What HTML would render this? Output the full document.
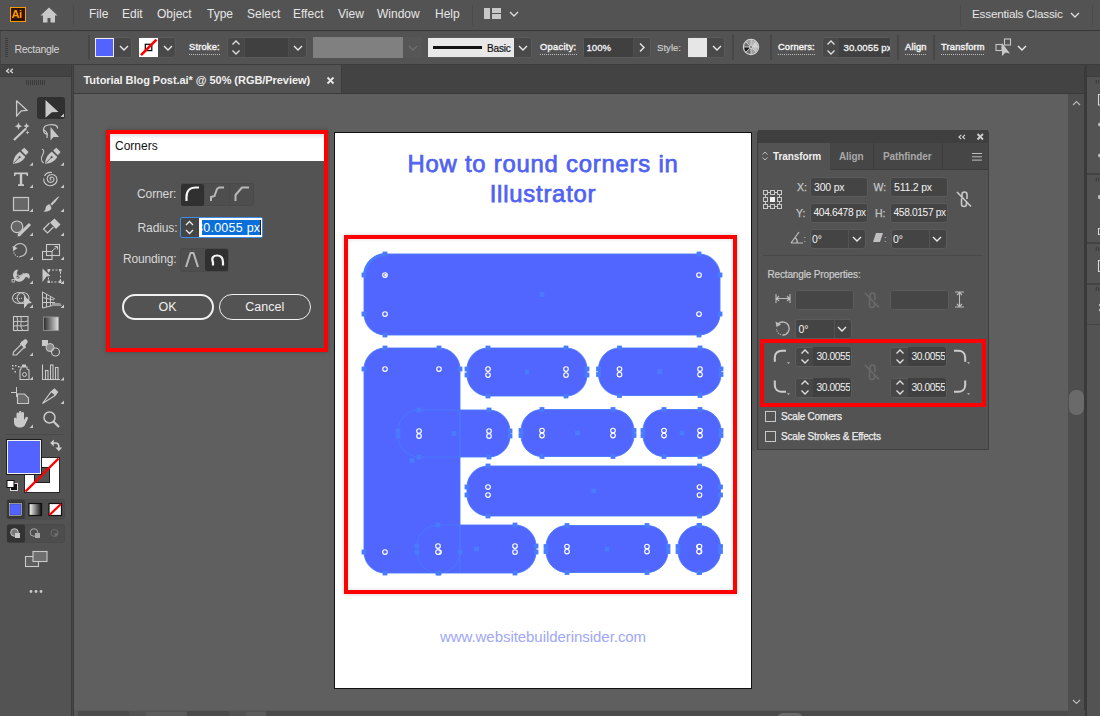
<!DOCTYPE html>
<html><head><meta charset="utf-8">
<style>
*{box-sizing:border-box;margin:0;padding:0}
html,body{width:1100px;height:716px;overflow:hidden;background:#535353;font-family:"Liberation Sans",sans-serif;color:#dcdcdc}
.a{position:absolute}
.t{position:absolute;white-space:nowrap;line-height:1}
.sep{position:absolute;width:1px;background:#454545}
.box{position:absolute;background:#464646;border:1px solid #3c3c3c;border-radius:3px}
.chev{position:absolute}
</style></head><body>
<!-- MENU BAR -->
<div class="a" style="left:0;top:0;width:1100px;height:30px;background:#535353"></div>
<div class="a" style="left:0;top:30px;width:1100px;height:1px;background:#383838"></div>
<!-- CONTROL BAR -->
<div class="a" style="left:1px;top:31px;width:1099px;height:33px;background:#535353;border-radius:3px 0 0 0"></div>
<div class="a" style="left:0;top:64px;width:1100px;height:1px;background:#3d3d3d"></div>
<!-- TOOLS PANEL -->
<div class="a" style="left:0;top:65px;width:72px;height:651px;background:#535353"></div>
<div class="a" style="left:0;top:65px;width:71px;height:11px;background:#434343"></div>
<div class="a" style="left:71px;top:65px;width:1px;height:651px;background:#3b3b3b"></div><div class="a" style="left:72px;top:65px;width:1px;height:651px;background:#484848"></div><div class="a" style="left:73px;top:65px;width:1px;height:651px;background:#3b3b3b"></div>
<!-- TAB BAR -->
<div class="a" style="left:74px;top:65px;width:1011px;height:28px;background:#434343"></div>
<div class="a" style="left:74px;top:65px;width:267px;height:28px;background:#535353"></div><div class="a" style="left:341px;top:65px;width:1px;height:28px;background:#3d3d3d"></div>
<div class="a" style="left:74px;top:93px;width:1011px;height:1px;background:#3a3a3a"></div>
<!-- CANVAS -->
<div class="a" style="left:74px;top:94px;width:994px;height:616px;background:#5f5f5f"></div>
<div class="a" style="left:1068px;top:94px;width:17px;height:616px;background:#4e4e4e"></div>
<div class="a" style="left:74px;top:710px;width:1011px;height:6px;background:#4a4a4a"></div>
<div class="a" style="left:1085px;top:65px;width:1px;height:651px;background:#353535"></div>
<div class="a" style="left:1086px;top:65px;width:14px;height:651px;background:#535353"></div>
<div class="a" style="left:1086px;top:65px;width:14px;height:11px;background:#434343"></div>

<!-- MENU CONTENT -->
<div class="a" style="left:10px;top:7px;width:16px;height:15px;background:#2d1400;border:1.5px solid #ff9a00"></div>
<div class="t" style="left:11.5px;top:8.5px;font-size:11px;font-weight:bold;color:#ff9a00;letter-spacing:-0.5px">Ai</div>
<svg class="a" style="left:40px;top:7px" width="18" height="16" viewBox="0 0 18 16"><path d="M9 0.5 L17.5 8.5 L15 8.5 L15 15.5 L10.5 15.5 L10.5 11 L7.5 11 L7.5 15.5 L3 15.5 L3 8.5 L0.5 8.5 Z" fill="#c8c8c8"/></svg>
<div class="sep" style="left:73px;top:5px;height:20px;background:#4a4a4a"></div>
<div class="t" style="left:89px;top:8px;font-size:12px;color:#e6e6e6">File</div>
<div class="t" style="left:122px;top:8px;font-size:12px;color:#e6e6e6">Edit</div>
<div class="t" style="left:157px;top:8px;font-size:12px;color:#e6e6e6">Object</div>
<div class="t" style="left:207px;top:8px;font-size:12px;color:#e6e6e6">Type</div>
<div class="t" style="left:247px;top:8px;font-size:12px;color:#e6e6e6">Select</div>
<div class="t" style="left:293px;top:8px;font-size:12px;color:#e6e6e6">Effect</div>
<div class="t" style="left:338px;top:8px;font-size:12px;color:#e6e6e6">View</div>
<div class="t" style="left:377px;top:8px;font-size:12px;color:#e6e6e6">Window</div>
<div class="t" style="left:435px;top:8px;font-size:12px;color:#e6e6e6">Help</div>
<div class="sep" style="left:472px;top:5px;height:20px;background:#4a4a4a"></div>
<div class="a" style="left:484px;top:8px;width:6px;height:11px;background:#c8c8c8"></div>
<div class="a" style="left:492px;top:8px;width:9px;height:4.5px;background:#c8c8c8"></div>
<div class="a" style="left:492px;top:14px;width:9px;height:5px;background:#c8c8c8"></div>
<svg class="a" style="left:509px;top:11px" width="10" height="6" viewBox="0 0 10 6"><path d="M1 1 L5 5 L9 1" stroke="#dcdcdc" stroke-width="1.4" fill="none"/></svg>
<div class="sep" style="left:960px;top:5px;height:20px;background:#4a4a4a"></div>
<div class="t" style="left:972px;top:8px;font-size:11.7px;color:#e6e6e6;letter-spacing:-0.2px">Essentials Classic</div>
<svg class="a" style="left:1070px;top:12px" width="10" height="6" viewBox="0 0 10 6"><path d="M1 1 L5 5 L9 1" stroke="#dcdcdc" stroke-width="1.4" fill="none"/></svg>
<div class="sep" style="left:1092px;top:5px;height:20px;background:#4a4a4a"></div>

<!-- CONTROL CONTENT -->
<svg class="a" style="left:0;top:30px" width="10" height="36" viewBox="0 0 10 36"><rect x="0" y="1" width="1" height="33" fill="#474747"/><g fill="#3a3a3a"><rect x="5" y="8" width="3" height="1"/><rect x="5" y="10" width="3" height="1"/><rect x="5" y="12" width="3" height="1"/><rect x="5" y="14" width="3" height="1"/><rect x="5" y="16" width="3" height="1"/><rect x="5" y="18" width="3" height="1"/><rect x="5" y="20" width="3" height="1"/><rect x="5" y="22" width="3" height="1"/><rect x="5" y="24" width="3" height="1"/><rect x="5" y="26" width="3" height="1"/></g></svg>
<div class="t" style="left:14.5px;top:43.5px;font-size:10.5px;color:#d6d6d6;letter-spacing:-0.3px">Rectangle</div>
<div class="sep" style="left:88px;top:35px;height:25px;width:1.5px;background:#474747"></div>
<div class="box" style="left:95px;top:37px;width:37px;height:20.5px;background:#494949;border-color:#5a5a5a"></div>
<div class="a" style="left:95px;top:38px;width:19px;height:19px;background:#5263ff;border:1px solid #ececec"></div>
<svg class="a" style="left:118.5px;top:44.5px" width="10" height="6" viewBox="0 0 10 6"><path d="M1 1 L5 5 L9 1" stroke="#e8e8e8" stroke-width="1.4" fill="none"/></svg>
<div class="box" style="left:139px;top:37px;width:37px;height:20.5px;background:#494949;border-color:#5a5a5a"></div>
<svg class="a" style="left:139px;top:38px" width="19" height="19" viewBox="0 0 19 19"><rect width="19" height="19" fill="#fff"/><rect x="6.3" y="6.3" width="6.5" height="6.3" fill="none" stroke="#000" stroke-width="1.2"/><path d="M2 17.2 L17.5 1.7" stroke="#ff0000" stroke-width="2.6"/></svg>
<svg class="a" style="left:162.5px;top:44.5px" width="10" height="6" viewBox="0 0 10 6"><path d="M1 1 L5 5 L9 1" stroke="#e8e8e8" stroke-width="1.4" fill="none"/></svg>
<div class="t" style="left:189px;top:43.1px;font-size:9.3px;color:#f4f4f4;letter-spacing:0.2px;-webkit-text-stroke:0.4px #f4f4f4">Stroke:</div>
<div class="a" style="left:189px;top:54px;width:31px;height:1px;background:repeating-linear-gradient(90deg,#bdbdbd 0 1px,transparent 1px 2px)"></div>
<div class="box" style="left:227px;top:37px;width:80px;height:20.5px;background:#474747;border-color:#5a5a5a"></div>
<div class="a" style="left:244px;top:38px;width:45px;height:19px;background:#404040"></div>
<div class="a" style="left:244px;top:38px;width:1px;height:19px;background:#4c4c4c"></div>
<div class="a" style="left:288px;top:38px;width:1px;height:19px;background:#4c4c4c"></div>
<svg class="a" style="left:230px;top:39px" width="12" height="17" viewBox="0 0 12 17"><path d="M2.5 5.5 L6 2 L9.5 5.5 M2.5 11.5 L6 15 L9.5 11.5" stroke="#e0e0e0" stroke-width="1.3" fill="none"/></svg>
<svg class="a" style="left:293px;top:44.5px" width="10" height="6" viewBox="0 0 10 6"><path d="M1 1 L5 5 L9 1" stroke="#e8e8e8" stroke-width="1.4" fill="none"/></svg>
<div class="a" style="left:313px;top:37px;width:90px;height:21px;background:#808080"></div>
<div class="a" style="left:403px;top:37px;width:19px;height:21px;background:#565656"></div>
<svg class="a" style="left:407.5px;top:44.5px" width="10" height="6" viewBox="0 0 10 6"><path d="M1 1 L5 5 L9 1" stroke="#6e6e6e" stroke-width="1.4" fill="none"/></svg>
<div class="box" style="left:428px;top:37px;width:104px;height:20.5px;background:#494949;border-color:#5a5a5a"></div>
<div class="a" style="left:428px;top:38px;width:86px;height:19px;background:#e8e8e8"></div>
<div class="a" style="left:433px;top:46px;width:49px;height:3px;background:#111"></div>
<div class="t" style="left:487px;top:43.5px;font-size:10px;color:#111;letter-spacing:-0.15px;-webkit-text-stroke:0.2px #111">Basic</div>
<svg class="a" style="left:518px;top:44.5px" width="10" height="6" viewBox="0 0 10 6"><path d="M1 1 L5 5 L9 1" stroke="#e8e8e8" stroke-width="1.4" fill="none"/></svg>
<div class="t" style="left:540px;top:43.1px;font-size:9.3px;color:#f4f4f4;letter-spacing:0.3px;-webkit-text-stroke:0.4px #f4f4f4">Opacity:</div>
<div class="a" style="left:540px;top:54px;width:37px;height:1px;background:repeating-linear-gradient(90deg,#bdbdbd 0 1px,transparent 1px 2px)"></div>
<div class="box" style="left:583px;top:37px;width:68px;height:20.5px;background:#494949;border-color:#5a5a5a"></div>
<div class="a" style="left:584px;top:38px;width:49px;height:19px;background:#404040"></div>
<div class="a" style="left:633px;top:38px;width:1px;height:19px;background:#4e4e4e"></div>
<div class="t" style="left:586.5px;top:43px;font-size:9.6px;color:#f4f4f4;letter-spacing:0px;-webkit-text-stroke:0.3px #f4f4f4">100%</div>
<svg class="a" style="left:638px;top:42px" width="8" height="11" viewBox="0 0 8 11"><path d="M2 1.5 L6 5.5 L2 9.5" stroke="#e8e8e8" stroke-width="1.4" fill="none"/></svg>
<div class="t" style="left:657px;top:43.1px;font-size:9.5px;color:#d0d0d0;letter-spacing:0.05px;-webkit-text-stroke:0.15px #d0d0d0">Style:</div>
<div class="box" style="left:688px;top:37px;width:37px;height:20.5px;background:#494949;border-color:#5a5a5a"></div>
<div class="a" style="left:688px;top:38px;width:19px;height:19px;background:#e6e6e6"></div>
<svg class="a" style="left:711.5px;top:44.5px" width="10" height="6" viewBox="0 0 10 6"><path d="M1 1 L5 5 L9 1" stroke="#e8e8e8" stroke-width="1.4" fill="none"/></svg>
<div class="sep" style="left:732px;top:35px;height:25px;width:1.5px;background:#474747"></div>
<svg class="a" style="left:742px;top:38px" width="18" height="18" viewBox="0 0 18 18"><path d="M9 9 L9.00 2.00 A7 7 0 0 1 13.95 4.05 Z" fill="#b4b4b4"/><path d="M9 9 L13.95 4.05 A7 7 0 0 1 16.00 9.00 Z" fill="#d2d2d2"/><path d="M9 9 L16.00 9.00 A7 7 0 0 1 13.95 13.95 Z" fill="#c0c0c0"/><path d="M9 9 L13.95 13.95 A7 7 0 0 1 9.00 16.00 Z" fill="#a0a0a0"/><path d="M9 9 L9.00 16.00 A7 7 0 0 1 4.05 13.95 Z" fill="#6e6e6e"/><path d="M9 9 L4.05 13.95 A7 7 0 0 1 2.00 9.00 Z" fill="#1c1c1c"/><path d="M9 9 L2.00 9.00 A7 7 0 0 1 4.05 4.05 Z" fill="#707070"/><path d="M9 9 L4.05 4.05 A7 7 0 0 1 9.00 2.00 Z" fill="#9c9c9c"/><path d="M9.00 7.20 L9.00 1.50" stroke="#d4d4d4" stroke-width="0.9"/><path d="M10.27 7.73 L14.30 3.70" stroke="#d4d4d4" stroke-width="0.9"/><path d="M10.80 9.00 L16.50 9.00" stroke="#d4d4d4" stroke-width="0.9"/><path d="M10.27 10.27 L14.30 14.30" stroke="#d4d4d4" stroke-width="0.9"/><path d="M9.00 10.80 L9.00 16.50" stroke="#d4d4d4" stroke-width="0.9"/><path d="M7.73 10.27 L3.70 14.30" stroke="#d4d4d4" stroke-width="0.9"/><path d="M7.20 9.00 L1.50 9.00" stroke="#d4d4d4" stroke-width="0.9"/><path d="M7.73 7.73 L3.70 3.70" stroke="#d4d4d4" stroke-width="0.9"/><circle cx="9" cy="9" r="7.6" fill="none" stroke="#d4d4d4" stroke-width="1.2"/><circle cx="9" cy="9" r="1.7" fill="#8a8a8a" stroke="#d4d4d4" stroke-width="0.9"/></svg>
<div class="sep" style="left:770px;top:35px;height:25px;width:1.5px;background:#474747"></div>
<div class="t" style="left:778px;top:43.1px;font-size:9.3px;color:#f4f4f4;letter-spacing:0.15px;-webkit-text-stroke:0.4px #f4f4f4">Corners:</div>
<div class="a" style="left:778px;top:54px;width:37px;height:1px;background:repeating-linear-gradient(90deg,#bdbdbd 0 1px,transparent 1px 2px)"></div>
<div class="box" style="left:822px;top:37px;width:69px;height:20.5px;background:#494949;border-color:#5a5a5a"></div>
<div class="a" style="left:839px;top:38px;width:51px;height:19px;background:#404040"></div>
<svg class="a" style="left:825px;top:39px" width="12" height="17" viewBox="0 0 12 17"><path d="M2.5 5.5 L6 2 L9.5 5.5 M2.5 11.5 L6 15 L9.5 11.5" stroke="#e0e0e0" stroke-width="1.3" fill="none"/></svg>
<div class="a" style="left:840px;top:38px;width:50px;height:19px;overflow:hidden"><div class="t" style="left:3.5px;top:5px;font-size:9.6px;color:#f4f4f4;letter-spacing:0.05px;-webkit-text-stroke:0.3px #f4f4f4">30.0055 px</div></div>
<div class="sep" style="left:897px;top:35px;height:25px;width:1.5px;background:#474747"></div>
<div class="t" style="left:905px;top:43.1px;font-size:9.3px;color:#f4f4f4;letter-spacing:0.2px;-webkit-text-stroke:0.4px #f4f4f4">Align</div>
<div class="a" style="left:905px;top:54px;width:22px;height:1px;background:repeating-linear-gradient(90deg,#bdbdbd 0 1px,transparent 1px 2px)"></div>
<div class="sep" style="left:933px;top:35px;height:25px;width:1.5px;background:#474747"></div>
<div class="t" style="left:941px;top:43.1px;font-size:9.3px;color:#f4f4f4;letter-spacing:0.2px;-webkit-text-stroke:0.4px #f4f4f4">Transform</div>
<div class="a" style="left:941px;top:54px;width:44px;height:1px;background:repeating-linear-gradient(90deg,#bdbdbd 0 1px,transparent 1px 2px)"></div>
<svg class="a" style="left:995px;top:38px" width="18" height="19" viewBox="0 0 18 19"><rect x="9.5" y="1" width="6" height="6" fill="none" stroke="#c8c8c8" stroke-width="1.1"/><rect x="1" y="6.5" width="6" height="6" fill="none" stroke="#c8c8c8" stroke-width="1.1"/><path d="M7 5 L7 18 L10.5 14.5 L15 15.5 Z" fill="#c8c8c8"/></svg>
<svg class="a" style="left:1017px;top:44.5px" width="10" height="6" viewBox="0 0 10 6"><path d="M1 1 L5 5 L9 1" stroke="#e8e8e8" stroke-width="1.4" fill="none"/></svg>


<!-- RIGHT DOCK -->
<div class="a" style="left:1084px;top:65px;width:2.5px;height:651px;background:#3a3a3a"></div>
<div class="a" style="left:1086.5px;top:76px;width:14px;height:1px;background:#3e3e3e"></div>
<div class="a" style="left:1086.5px;top:173px;width:14px;height:2px;background:#434343"></div>
<div class="a" style="left:1086.5px;top:242px;width:14px;height:2px;background:#434343"></div>
<div class="a" style="left:1086.5px;top:282.5px;width:14px;height:2px;background:#434343"></div>
<div class="a" style="left:1086.5px;top:323.5px;width:14px;height:1.5px;background:#434343"></div>
<svg class="a" style="left:1086px;top:76px" width="14" height="250" viewBox="0 0 14 250"><g fill="#3a3a3a"><rect x="9.8" y="4" width="1" height="3.5"/><rect x="12" y="4" width="1" height="3.5"/><rect x="9.8" y="102" width="1" height="3.5"/><rect x="12" y="102" width="1" height="3.5"/><rect x="9.8" y="171" width="1" height="3.5"/><rect x="12" y="171" width="1" height="3.5"/><rect x="9.8" y="211" width="1" height="3.5"/><rect x="12" y="211" width="1" height="3.5"/></g>
<g fill="none" stroke="#d8d8d8" stroke-width="1.1"><path d="M15 18.5 L12.5 18.5 L12.5 29 L15 29"/><path d="M15 152.5 L12.5 152.5 L12.5 158.5 L15 158.5"/><path d="M15 184.5 L12.5 184.5 L12.5 195.5 L15 195.5"/></g>
<g fill="#bcbcbc"><circle cx="14" cy="48.5" r="2"/><circle cx="14" cy="79.5" r="2"/><circle cx="14" cy="121" r="2.2"/><circle cx="14" cy="229" r="1.2"/><circle cx="14" cy="234" r="1.2"/></g></svg>
<!-- H SCROLL -->
<div class="a" style="left:74px;top:710px;width:994px;height:1px;background:#5a5a5a"></div>
<div class="a" style="left:74px;top:711px;width:994px;height:5px;background:#4a4a4a"></div>
<div class="a" style="left:74px;top:711px;width:4px;height:5px;background:#585858"></div>
<div class="a" style="left:128.5px;top:711px;width:17px;height:5px;background:#525252"></div>
<div class="a" style="left:146px;top:711px;width:41px;height:5px;background:#5c5c5c;border-top:1px solid #525252"></div>
<div class="a" style="left:228.5px;top:711px;width:17px;height:5px;background:#525252"></div>
<div class="a" style="left:246px;top:711px;width:20px;height:5px;background:#5c5c5c;border-top:1px solid #525252"></div>
<div class="a" style="left:1068px;top:710px;width:17px;height:6px;background:#4e4e4e"></div>
<div class="a" style="left:777px;top:712.5px;width:26px;height:12px;background:#6a6a6a;border-radius:6px"></div>
<!-- TOOLS CONTENT -->
<svg class="a" style="left:0;top:0" width="74" height="716" viewBox="0 0 74 716">
<path d="M9 68.8 L6.6 70.9 L9 73 M12.8 68.8 L10.4 70.9 L12.8 73" fill="none" stroke="#d0d0d0" stroke-width="1.4"/><rect x="0" y="76" width="71" height="1" fill="#3e3e3e"/>
<g fill="#3a3a3a"><rect x="26" y="80" width="1" height="5"/><rect x="28" y="80" width="1" height="5"/><rect x="30" y="80" width="1" height="5"/><rect x="32" y="80" width="1" height="5"/><rect x="34" y="80" width="1" height="5"/><rect x="36" y="80" width="1" height="5"/><rect x="38" y="80" width="1" height="5"/><rect x="40" y="80" width="1" height="5"/><rect x="42" y="80" width="1" height="5"/><rect x="44" y="80" width="1" height="5"/></g>
<rect x="37" y="97" width="28" height="22" rx="3" fill="#303030"/>
<path d="M16.6 100.8 L27.2 110.4 L21.2 110.8 L16.6 116.2 Z" fill="none" stroke="#c9c9c9" stroke-width="1.3" stroke-linejoin="round"/>
<path d="M45.5 100 L58.5 112 L51.8 112.2 L45.5 117.8 Z" fill="#c9c9c9"/>
<path d="M64 117 L64 113.5 L60.5 117 Z" fill="#c9c9c9"/>
<!-- magic wand -->
<path d="M14 140 L26 128.5" stroke="#c9c9c9" stroke-width="2.2"/>
<path d="M18.5 122.5 l1.1 2.6 2.6 1.1 -2.6 1.1 -1.1 2.6 -1.1 -2.6 -2.6 -1.1 2.6 -1.1Z M26.5 123 l0.9 2.1 2.1 0.9 -2.1 0.9 -0.9 2.1 -0.9 -2.1 -2.1 -0.9 2.1 -0.9Z M27.5 130.5 l0.6 1.4 1.4 0.6 -1.4 0.6 -0.6 1.4 -0.6 -1.4 -1.4 -0.6 1.4 -0.6Z" fill="#c9c9c9"/>
<!-- lasso -->
<path d="M48 134 C42 134 42 126 48 125 C54 124 58 125 57.5 128.5" fill="none" stroke="#c9c9c9" stroke-width="1.2"/>
<path d="M44 130 C46 131 48 133 47 138" fill="none" stroke="#c9c9c9" stroke-width="1.2"/>
<path d="M50.5 127 L50.5 140.5 L53.5 137 L59 137 Z" fill="#c9c9c9"/>
<!-- pen -->
<path d="M13 163.8 C13.5 158.5 15.5 154.5 20 151.8 L25.3 157 C22.5 161.5 18.5 163.5 13 163.8 Z" fill="#c9c9c9"/>
<path d="M21.2 150.6 L24.3 147.8 L28.6 152 L25.8 155.2 Z" fill="#c9c9c9"/>
<path d="M13.8 163 L19.2 157.6" stroke="#535353" stroke-width="0.9"/><circle cx="19.6" cy="157.2" r="1.1" fill="#535353"/>
<path d="M33 165.8 L33 162.3 L29.5 165.8 Z" fill="#c9c9c9"/>
<!-- curvature pen -->
<path d="M45 163.8 C45.5 158.5 47.5 154.5 52 151.8 L57.3 157 C54.5 161.5 50.5 163.5 45 163.8 Z" fill="#c9c9c9"/>
<path d="M53.2 150.6 L56.3 147.8 L60.6 152 L57.8 155.2 Z" fill="#c9c9c9"/>
<path d="M45.8 163 L51.2 157.6" stroke="#535353" stroke-width="0.9"/><circle cx="51.6" cy="157.2" r="1.1" fill="#535353"/>
<path d="M42 149 C44.5 150 44 152.5 42.5 155 C41 157.5 41 161 43.5 163" fill="none" stroke="#c9c9c9" stroke-width="1.1"/>
<path d="M64 165.8 L64 162.3 L60.5 165.8 Z" fill="#c9c9c9"/>
<!-- type -->
<path d="M14 172.5 L28 172.5 L28 176 L26.8 176 L26.3 174.3 L22.2 174.3 L22.2 184.3 L24 184.3 L24 186 L18 186 L18 184.3 L19.8 184.3 L19.8 174.3 L15.7 174.3 L15.2 176 L14 176 Z" fill="#c9c9c9"/>
<path d="M33 188 L33 184.5 L29.5 188 Z" fill="#c9c9c9"/>
<!-- spiral -->
<path d="M51.5 180 C50 180 49.5 178.5 50.5 177.5 C52 176.5 54 177.5 54 179.5 C54 182 51 183 49 182 C46.5 180.5 46.5 176.5 49.5 175 C53 173.5 57 175.5 57 179.5 C57 184 52.5 186.5 48.5 185.5 C45 184.5 43.5 181.5 43.8 178.5 M44.5 176 C46 173 49 172 52 172.5" fill="none" stroke="#c9c9c9" stroke-width="1.1"/>
<path d="M64 188 L64 184.5 L60.5 188 Z" fill="#c9c9c9"/>
<!-- rectangle -->
<rect x="13.5" y="197.5" width="15" height="13" fill="#676767" stroke="#c9c9c9" stroke-width="1.2"/>
<path d="M33 212 L33 208.5 L29.5 212 Z" fill="#c9c9c9"/>
<!-- brush -->
<path d="M59.5 196 C58 199 54 203.5 52 205.5 L50.5 204 C52.5 202 56.5 197.5 59.5 196 Z" fill="#c9c9c9"/>
<path d="M50 204.5 C47 204 45.5 207 45.5 209 C45 211 43 211.5 43 211.5 C46 212 50.5 211.5 51.5 208 Z" fill="#c9c9c9"/>
<path d="M64 212 L64 208.5 L60.5 212 Z" fill="#c9c9c9"/>
<!-- shaper -->
<circle cx="17" cy="226.8" r="5.8" fill="#676767" stroke="#c9c9c9" stroke-width="1.2"/>
<path d="M18.5 235.5 L30 224" stroke="#c9c9c9" stroke-width="3"/>
<path d="M17.5 236.5 L18.2 233.5 L20.5 235.8 Z" fill="#c9c9c9"/>
<path d="M33 236 L33 232.5 L29.5 236 Z" fill="#c9c9c9"/>
<!-- eraser -->
<path d="M50 222.5 L54.5 218.5 L60.5 224.5 L56 229 Z" fill="#c9c9c9"/>
<path d="M49.5 223 L43.5 229 L47.5 233 L53.5 227" fill="none" stroke="#c9c9c9" stroke-width="1.2"/>
<path d="M64 236 L64 232.5 L60.5 236 Z" fill="#c9c9c9"/>
<!-- rotate -->
<path d="M13.5 250 A6.5 6.5 0 1 1 20 256.5" fill="none" stroke="#c9c9c9" stroke-width="1.2"/>
<path d="M20 257 A6.5 6.5 0 0 1 13.5 250.5" fill="none" stroke="#c9c9c9" stroke-width="1.2" stroke-dasharray="1 1.3"/>
<path d="M12.5 246 L13.5 251 L17.5 248 Z" fill="#c9c9c9"/>
<path d="M33 260 L33 256.5 L29.5 260 Z" fill="#c9c9c9"/>
<!-- scale -->
<rect x="46.5" y="244.5" width="13" height="11" fill="none" stroke="#c9c9c9" stroke-width="1.1"/>
<rect x="42.5" y="251.5" width="9.5" height="8" fill="none" stroke="#c9c9c9" stroke-width="1.1"/>
<path d="M52 251 L57.5 246.5 M54.5 246.5 L57.5 246.5 L57.5 249.5" fill="none" stroke="#c9c9c9" stroke-width="1"/>
<path d="M64 260 L64 256.5 L60.5 260 Z" fill="#c9c9c9"/>
<!-- puppet warp -->
<path d="M13 276 C13 271 16 269 18 270 C17 272 16 274 18 276 C20 278 23 273 26 273 C29 273 31 276 29 279 C28 277 26 276 25 278 C23 282 18 283 15 280 Z" fill="#c9c9c9"/>
<circle cx="18" cy="277" r="2" fill="#535353" stroke="#c9c9c9" stroke-width="0.8"/>
<rect x="12" y="279.5" width="2.5" height="2.5" fill="#535353" stroke="#c9c9c9" stroke-width="0.8"/>
<path d="M14 280 L24 273" stroke="#c9c9c9" stroke-width="0.8"/>
<path d="M33 284 L33 280.5 L29.5 284 Z" fill="#c9c9c9"/>
<!-- free transform -->
<path d="M42.5 268.5 L50.5 276 L46.5 276.5 L42.5 282 Z" fill="#c9c9c9"/>
<rect x="48.5" y="270" width="12" height="12" fill="none" stroke="#c9c9c9" stroke-width="1" stroke-dasharray="2 1.5"/>
<g fill="#c9c9c9"><rect x="47.5" y="269" width="2.5" height="2.5"/><rect x="59" y="269" width="2.5" height="2.5"/><rect x="47.5" y="280.5" width="2.5" height="2.5"/><rect x="59" y="280.5" width="2.5" height="2.5"/></g>
<path d="M64 284 L64 280.5 L60.5 284 Z" fill="#c9c9c9"/>
<!-- shape builder -->
<ellipse cx="19" cy="298" rx="6.5" ry="5.5" fill="none" stroke="#c9c9c9" stroke-width="1.1"/>
<ellipse cx="23" cy="298" rx="6" ry="5.5" fill="none" stroke="#c9c9c9" stroke-width="1.1"/>
<path d="M15 298.5 h1 M17 298.5 h1 M19 298.5 h1 M21 298.5 h1" stroke="#c9c9c9" stroke-width="1"/>
<path d="M24 295.5 L32 303 L28.2 303.5 L24 308.5 Z" fill="#c9c9c9"/>
<path d="M33 308 L33 304.5 L29.5 308 Z" fill="#c9c9c9"/>
<!-- perspective grid -->
<path d="M42.5 292 L42.5 308 M42.5 292 L55 299 M42.5 308 L55 305 M46.5 294 L46.5 307 M50.5 296.5 L50.5 306 M42.5 297.5 L54 300 M42.5 302.5 L55 302.5" fill="none" stroke="#c9c9c9" stroke-width="1"/>
<path d="M52 303 L60 303 L62 306 L52 306 Z" fill="#9a9a9a"/>
<path d="M64 308 L64 304.5 L60.5 308 Z" fill="#c9c9c9"/>
<!-- mesh -->
<rect x="13.5" y="316.5" width="14.5" height="14" fill="none" stroke="#c9c9c9" stroke-width="1.1"/>
<path d="M17 317 C19 322 16 326 17.5 330 M13.5 322 C18 320 23 323 28 321 M21 317 C22 322 19 326 23 330.5 M13.5 326 C18 325 23 327 28 325" fill="none" stroke="#c9c9c9" stroke-width="1"/>
<!-- gradient -->
<defs><linearGradient id="gr" x1="0" x2="1"><stop offset="0" stop-color="#2a2a2a"/><stop offset="1" stop-color="#e0e0e0"/></linearGradient>
<linearGradient id="gr2" x1="0" x2="1"><stop offset="0" stop-color="#fff"/><stop offset="1" stop-color="#111"/></linearGradient></defs>
<rect x="43.5" y="317" width="15" height="13.5" fill="url(#gr)" stroke="#9a9a9a" stroke-width="0.8"/>
<!-- eyedropper -->
<path d="M13 355 L13.5 352 L22 343.5 L25 346.5 L16.5 355 Z" fill="none" stroke="#c9c9c9" stroke-width="1.2"/>
<path d="M21 342 L24.5 339.5 C26 338.5 28.5 341 27.5 342.5 L25 346 L26 347.5 L24.8 348.7 L19.8 343.7 L21 342.5 Z" fill="#c9c9c9"/>
<path d="M33 356 L33 352.5 L29.5 356 Z" fill="#c9c9c9"/>
<!-- blend -->
<rect x="42" y="340" width="6" height="6" fill="#c9c9c9"/>
<circle cx="50" cy="347.5" r="4" fill="#8a8a8a" stroke="#c9c9c9" stroke-width="1"/>
<circle cx="55.5" cy="352" r="4" fill="none" stroke="#c9c9c9" stroke-width="1.1"/>
<!-- symbol sprayer -->
<g fill="#c9c9c9"><rect x="12" y="365" width="1.5" height="1.5"/><rect x="15" y="365" width="1.5" height="1.5"/><rect x="12" y="368" width="1.5" height="1.5"/><rect x="18" y="366" width="1.5" height="1.5"/><rect x="14.5" y="371" width="1.5" height="1.5"/></g>
<path d="M21 367 L27 367 L27 369 L29 370 L29 379.5 L20 379.5 L20 370 L21 369 Z" fill="none" stroke="#c9c9c9" stroke-width="1.1"/>
<circle cx="24.5" cy="374.5" r="2" fill="none" stroke="#c9c9c9" stroke-width="1"/>
<rect x="22" y="364.5" width="4" height="2.5" fill="#c9c9c9"/>
<path d="M33 380 L33 376.5 L29.5 380 Z" fill="#c9c9c9"/>
<!-- graph -->
<path d="M42.5 364.5 L42.5 379.5 L60 379.5" fill="none" stroke="#c9c9c9" stroke-width="1.1"/>
<g fill="none" stroke="#c9c9c9" stroke-width="1.1"><rect x="45.5" y="370.5" width="2.5" height="9"/><rect x="50.5" y="365" width="2.5" height="14.5"/><rect x="55.5" y="367.5" width="2.5" height="12"/></g>
<path d="M64 380.5 L64 377 L60.5 380.5 Z" fill="#c9c9c9"/>
<!-- artboard -->
<path d="M11 392.5 L17 392.5 M16.5 387 L16.5 397" stroke="#c9c9c9" stroke-width="1"/>
<path d="M17.5 394 L24.5 394 L28.5 398 L28.5 403.5 L17.5 403.5 Z" fill="#6a6a6a" stroke="#c9c9c9" stroke-width="1.1"/>
<!-- knife/slice -->
<path d="M42.5 403.5 L51 392 L54.5 389 L57.5 392 L55 395.5 Z" fill="none" stroke="#c9c9c9" stroke-width="1.2"/>
<path d="M51 392 L54.5 389 L57.5 392 L55 395.5 Z" fill="#c9c9c9"/>
<path d="M64 404 L64 400.5 L60.5 404 Z" fill="#c9c9c9"/>
<!-- hand -->
<path d="M14 419 C14 417 16 417 16.5 419 L16.5 414 C16.5 412 19 412 19 414 L19 412.5 C19 410.5 21.5 410.5 21.5 412.5 L21.5 413.5 C21.5 411.5 24 411.5 24 413.5 L24 420 L25.5 417.5 C26.5 416 28.5 417 28 418.5 L25 425 C24 427 22 427.5 19.5 427.5 C16 427.5 14 425 14 422 Z" fill="#c9c9c9"/>
<path d="M33 428 L33 424.5 L29.5 428 Z" fill="#c9c9c9"/>
<!-- zoom -->
<circle cx="49.5" cy="417.5" r="5.5" fill="none" stroke="#c9c9c9" stroke-width="1.5"/>
<path d="M53.5 421.5 L59 427" stroke="#c9c9c9" stroke-width="2.2"/>
<rect x="6" y="434" width="59" height="1" fill="#4a4a4a"/>
<!-- fill/stroke -->
<path d="M52.5 443 L55.5 443 Q58.8 443 58.8 446.5 L58.8 448.5" fill="none" stroke="#cfcfcf" stroke-width="1.7"/>
<path d="M50.2 443 L53.8 439.6 L53.8 446.4 Z M58.8 451.2 L55.4 447.6 L62.2 447.6 Z" fill="#cfcfcf"/>
<rect x="24.5" y="457.5" width="35" height="35" fill="#fff" stroke="#2a2a2a" stroke-width="1"/>
<rect x="34.5" y="467.5" width="15" height="15" fill="#535353" stroke="#1e1e1e" stroke-width="1"/>
<path d="M25.5 491.5 L58.5 458.5" stroke="#ff0000" stroke-width="2.4"/>
<rect x="6.5" y="439.5" width="35" height="35" fill="#5263ff" stroke="#1e1e1e" stroke-width="1"/>
<rect x="7.5" y="440.5" width="33" height="33" fill="none" stroke="#f2f2f2" stroke-width="1"/>
<rect x="10.5" y="483.5" width="7" height="7" fill="#111" stroke="#ddd" stroke-width="1"/>
<rect x="7" y="480.5" width="7" height="7" fill="#fff" stroke="#111" stroke-width="1"/>
<!-- color mode -->
<rect x="7" y="499.5" width="57.5" height="19.5" rx="2" fill="#4d4d4d" stroke="#4a4a4a" stroke-width="1"/>
<rect x="7" y="499.5" width="18" height="19.5" rx="2" fill="#3a3a3a"/>
<rect x="9.5" y="503.5" width="12" height="12" fill="#5263ff" stroke="#111" stroke-width="1.2"/>
<rect x="9.5" y="503.5" width="12" height="12" fill="none" stroke="#eee" stroke-width="0.6"/>
<rect x="29" y="503.5" width="12.5" height="12" fill="url(#gr2)" stroke="#111" stroke-width="1.2"/>
<rect x="49" y="503.5" width="12.5" height="12" fill="#fff" stroke="#111" stroke-width="1.2"/>
<path d="M49.5 515 L61 504" stroke="#ff0000" stroke-width="2.2"/>
<!-- draw mode -->
<rect x="7" y="524.5" width="57.5" height="18" rx="2" fill="#4d4d4d" stroke="#4a4a4a" stroke-width="1"/>
<rect x="7" y="524.5" width="18" height="18" rx="2" fill="#333"/>
<circle cx="14.5" cy="532.5" r="3.8" fill="#777" stroke="#c9c9c9" stroke-width="1"/><rect x="15" y="533" width="5" height="5" fill="#c9c9c9"/>
<circle cx="34" cy="532.5" r="3.8" fill="none" stroke="#aaa" stroke-width="1"/><rect x="35" y="533" width="5" height="5" fill="#aaa"/>
<circle cx="54.5" cy="533" r="3.5" fill="none" stroke="#6e6e6e" stroke-width="1"/><path d="M54.5 533 L58 533 A3.5 3.5 0 0 1 54.5 536.5 Z" fill="#6e6e6e"/>
<!-- screen mode -->
<rect x="25.5" y="556.5" width="13" height="10" fill="#5e5e5e" stroke="#c9c9c9" stroke-width="1.1"/>
<rect x="33" y="551.5" width="14" height="10" fill="#6e6e6e" stroke="#c9c9c9" stroke-width="1.1"/>
<circle cx="31" cy="591.5" r="1.4" fill="#c9c9c9"/><circle cx="36" cy="591.5" r="1.4" fill="#c9c9c9"/><circle cx="41" cy="591.5" r="1.4" fill="#c9c9c9"/>
</svg>

<!-- TAB CONTENT -->
<div class="t" style="left:83.5px;top:75px;font-size:11px;font-weight:bold;color:#f0f0f0;letter-spacing:-0.05px">Tutorial Blog Post.ai* @ 50% (RGB/Preview)</div>
<svg class="a" style="left:326px;top:76px" width="9" height="9" viewBox="0 0 9 9"><path d="M1.5 1.5 L7.5 7.5 M7.5 1.5 L1.5 7.5" stroke="#e8e8e8" stroke-width="1.8"/></svg>
<!-- SCROLLBARS -->
<svg class="a" style="left:1072px;top:100px" width="9" height="6" viewBox="0 0 9 6"><path d="M1 5 L4.5 1.5 L8 5" stroke="#b8b8b8" stroke-width="1.2" fill="none"/></svg>
<svg class="a" style="left:1072px;top:699px" width="9" height="6" viewBox="0 0 9 6"><path d="M1 1 L4.5 4.5 L8 1" stroke="#b8b8b8" stroke-width="1.2" fill="none"/></svg>
<div class="a" style="left:1069px;top:390px;width:15px;height:25px;background:#6a6a6a;border-radius:7px"></div>
<!-- ARTBOARD -->
<div class="a" style="left:334px;top:132px;width:418px;height:557px;background:#fff;border:1px solid #111"></div>
<div class="t" style="left:335px;top:148.5px;width:416px;text-align:center;font-size:23.8px;line-height:30px;color:#5062f2;letter-spacing:0.8px;-webkit-text-stroke:0.75px #5062f2">How to round corners in<br>Illustrator</div>
<div class="t" style="left:335px;top:629px;width:416px;text-align:center;font-size:15px;color:#a0a7f7;letter-spacing:-0.05px">www.websitebuilderinsider.com</div>
<div class="a" style="left:344px;top:235px;width:393px;height:359px;border:4px solid #ff0000;box-shadow:0 0 4px rgba(0,0,0,0.22),inset 0 0 4px rgba(0,0,0,0.14)"></div>
<!-- SHAPES -->
<svg class="a" style="left:0;top:0" width="1100" height="716" viewBox="0 0 1100 716">
<rect x="364" y="254" width="356" height="81" rx="21" fill="#5165ff"/>
<rect x="364" y="348" width="96" height="225" rx="21" fill="#5165ff"/>
<rect x="467" y="348" width="120" height="48" rx="21" fill="#5165ff"/>
<rect x="598.5" y="348" width="122.5" height="47.5" rx="21" fill="#5165ff"/>
<rect x="398" y="410" width="112" height="47" rx="21" fill="#5165ff"/>
<rect x="521" y="409.5" width="113" height="47" rx="21" fill="#5165ff"/>
<rect x="643" y="409.5" width="78" height="47" rx="21" fill="#5165ff"/>
<rect x="467" y="466" width="253.5" height="50" rx="21" fill="#5165ff"/>
<rect x="417" y="525" width="119" height="48" rx="21" fill="#5165ff"/>
<rect x="546" y="525.5" width="122" height="47" rx="21" fill="#5165ff"/>
<rect x="678" y="525.5" width="42.5" height="47" rx="21" fill="#5165ff"/>
<rect x="364" y="254" width="356" height="81" rx="21" fill="none" stroke="#4a7bff" stroke-width="1" opacity="0.9"/>
<rect x="364" y="348" width="96" height="225" rx="21" fill="none" stroke="#4a7bff" stroke-width="1" opacity="0.9"/>
<rect x="467" y="348" width="120" height="48" rx="21" fill="none" stroke="#4a7bff" stroke-width="1" opacity="0.9"/>
<rect x="598.5" y="348" width="122.5" height="47.5" rx="21" fill="none" stroke="#4a7bff" stroke-width="1" opacity="0.9"/>
<rect x="398" y="410" width="112" height="47" rx="21" fill="none" stroke="#4a7bff" stroke-width="1" opacity="0.9"/>
<rect x="521" y="409.5" width="113" height="47" rx="21" fill="none" stroke="#4a7bff" stroke-width="1" opacity="0.9"/>
<rect x="643" y="409.5" width="78" height="47" rx="21" fill="none" stroke="#4a7bff" stroke-width="1" opacity="0.9"/>
<rect x="467" y="466" width="253.5" height="50" rx="21" fill="none" stroke="#4a7bff" stroke-width="1" opacity="0.9"/>
<rect x="417" y="525" width="119" height="48" rx="21" fill="none" stroke="#4a7bff" stroke-width="1" opacity="0.9"/>
<rect x="546" y="525.5" width="122" height="47" rx="21" fill="none" stroke="#4a7bff" stroke-width="1" opacity="0.9"/>
<rect x="678" y="525.5" width="42.5" height="47" rx="21" fill="none" stroke="#4a7bff" stroke-width="1" opacity="0.9"/>
<path d="M460 409 L460 457 M460 525 L460 573" stroke="#4a7bff" stroke-width="1"/>
<path d="M364.5 276 A21.5 21.5 0 0 1 386 254.5" fill="none" stroke="#4a7bff" stroke-width="3"/>
<rect x="382.6" y="251.6" width="4.8" height="4.8" fill="#4a7bff"/>
<rect x="696.6" y="251.6" width="4.8" height="4.8" fill="#4a7bff"/>
<rect x="717.6" y="272.6" width="4.8" height="4.8" fill="#4a7bff"/>
<rect x="717.6" y="311.6" width="4.8" height="4.8" fill="#4a7bff"/>
<rect x="696.6" y="332.6" width="4.8" height="4.8" fill="#4a7bff"/>
<rect x="382.6" y="332.6" width="4.8" height="4.8" fill="#4a7bff"/>
<rect x="361.6" y="311.6" width="4.8" height="4.8" fill="#4a7bff"/>
<rect x="361.6" y="272.6" width="4.8" height="4.8" fill="#4a7bff"/>
<rect x="382.6" y="345.6" width="4.8" height="4.8" fill="#4a7bff"/>
<rect x="436.6" y="345.6" width="4.8" height="4.8" fill="#4a7bff"/>
<rect x="457.6" y="366.6" width="4.8" height="4.8" fill="#4a7bff"/>
<rect x="457.6" y="549.6" width="4.8" height="4.8" fill="#4a7bff"/>
<rect x="436.6" y="570.6" width="4.8" height="4.8" fill="#4a7bff"/>
<rect x="382.6" y="570.6" width="4.8" height="4.8" fill="#4a7bff"/>
<rect x="361.6" y="549.6" width="4.8" height="4.8" fill="#4a7bff"/>
<rect x="361.6" y="366.6" width="4.8" height="4.8" fill="#4a7bff"/>
<rect x="485.6" y="345.6" width="4.8" height="4.8" fill="#4a7bff"/>
<rect x="563.6" y="345.6" width="4.8" height="4.8" fill="#4a7bff"/>
<rect x="584.6" y="366.6" width="4.8" height="4.8" fill="#4a7bff"/>
<rect x="584.6" y="372.6" width="4.8" height="4.8" fill="#4a7bff"/>
<rect x="563.6" y="393.6" width="4.8" height="4.8" fill="#4a7bff"/>
<rect x="485.6" y="393.6" width="4.8" height="4.8" fill="#4a7bff"/>
<rect x="464.6" y="372.6" width="4.8" height="4.8" fill="#4a7bff"/>
<rect x="464.6" y="366.6" width="4.8" height="4.8" fill="#4a7bff"/>
<rect x="617.1" y="345.6" width="4.8" height="4.8" fill="#4a7bff"/>
<rect x="697.6" y="345.6" width="4.8" height="4.8" fill="#4a7bff"/>
<rect x="718.6" y="366.6" width="4.8" height="4.8" fill="#4a7bff"/>
<rect x="718.6" y="372.1" width="4.8" height="4.8" fill="#4a7bff"/>
<rect x="697.6" y="393.1" width="4.8" height="4.8" fill="#4a7bff"/>
<rect x="617.1" y="393.1" width="4.8" height="4.8" fill="#4a7bff"/>
<rect x="596.1" y="372.1" width="4.8" height="4.8" fill="#4a7bff"/>
<rect x="596.1" y="366.6" width="4.8" height="4.8" fill="#4a7bff"/>
<rect x="416.6" y="407.6" width="4.8" height="4.8" fill="#4a7bff"/>
<rect x="486.6" y="407.6" width="4.8" height="4.8" fill="#4a7bff"/>
<rect x="507.6" y="428.6" width="4.8" height="4.8" fill="#4a7bff"/>
<rect x="507.6" y="433.6" width="4.8" height="4.8" fill="#4a7bff"/>
<rect x="486.6" y="454.6" width="4.8" height="4.8" fill="#4a7bff"/>
<rect x="416.6" y="454.6" width="4.8" height="4.8" fill="#4a7bff"/>
<rect x="395.6" y="433.6" width="4.8" height="4.8" fill="#4a7bff"/>
<rect x="395.6" y="428.6" width="4.8" height="4.8" fill="#4a7bff"/>
<rect x="539.6" y="407.1" width="4.8" height="4.8" fill="#4a7bff"/>
<rect x="610.6" y="407.1" width="4.8" height="4.8" fill="#4a7bff"/>
<rect x="631.6" y="428.1" width="4.8" height="4.8" fill="#4a7bff"/>
<rect x="631.6" y="433.1" width="4.8" height="4.8" fill="#4a7bff"/>
<rect x="610.6" y="454.1" width="4.8" height="4.8" fill="#4a7bff"/>
<rect x="539.6" y="454.1" width="4.8" height="4.8" fill="#4a7bff"/>
<rect x="518.6" y="433.1" width="4.8" height="4.8" fill="#4a7bff"/>
<rect x="518.6" y="428.1" width="4.8" height="4.8" fill="#4a7bff"/>
<rect x="661.6" y="407.1" width="4.8" height="4.8" fill="#4a7bff"/>
<rect x="697.6" y="407.1" width="4.8" height="4.8" fill="#4a7bff"/>
<rect x="718.6" y="428.1" width="4.8" height="4.8" fill="#4a7bff"/>
<rect x="718.6" y="433.1" width="4.8" height="4.8" fill="#4a7bff"/>
<rect x="697.6" y="454.1" width="4.8" height="4.8" fill="#4a7bff"/>
<rect x="661.6" y="454.1" width="4.8" height="4.8" fill="#4a7bff"/>
<rect x="640.6" y="433.1" width="4.8" height="4.8" fill="#4a7bff"/>
<rect x="640.6" y="428.1" width="4.8" height="4.8" fill="#4a7bff"/>
<rect x="485.6" y="463.6" width="4.8" height="4.8" fill="#4a7bff"/>
<rect x="697.1" y="463.6" width="4.8" height="4.8" fill="#4a7bff"/>
<rect x="718.1" y="484.6" width="4.8" height="4.8" fill="#4a7bff"/>
<rect x="718.1" y="492.6" width="4.8" height="4.8" fill="#4a7bff"/>
<rect x="697.1" y="513.6" width="4.8" height="4.8" fill="#4a7bff"/>
<rect x="485.6" y="513.6" width="4.8" height="4.8" fill="#4a7bff"/>
<rect x="464.6" y="492.6" width="4.8" height="4.8" fill="#4a7bff"/>
<rect x="464.6" y="484.6" width="4.8" height="4.8" fill="#4a7bff"/>
<rect x="435.6" y="522.6" width="4.8" height="4.8" fill="#4a7bff"/>
<rect x="512.6" y="522.6" width="4.8" height="4.8" fill="#4a7bff"/>
<rect x="533.6" y="543.6" width="4.8" height="4.8" fill="#4a7bff"/>
<rect x="533.6" y="549.6" width="4.8" height="4.8" fill="#4a7bff"/>
<rect x="512.6" y="570.6" width="4.8" height="4.8" fill="#4a7bff"/>
<rect x="435.6" y="570.6" width="4.8" height="4.8" fill="#4a7bff"/>
<rect x="414.6" y="549.6" width="4.8" height="4.8" fill="#4a7bff"/>
<rect x="414.6" y="543.6" width="4.8" height="4.8" fill="#4a7bff"/>
<rect x="564.6" y="523.1" width="4.8" height="4.8" fill="#4a7bff"/>
<rect x="644.6" y="523.1" width="4.8" height="4.8" fill="#4a7bff"/>
<rect x="665.6" y="544.1" width="4.8" height="4.8" fill="#4a7bff"/>
<rect x="665.6" y="549.1" width="4.8" height="4.8" fill="#4a7bff"/>
<rect x="644.6" y="570.1" width="4.8" height="4.8" fill="#4a7bff"/>
<rect x="564.6" y="570.1" width="4.8" height="4.8" fill="#4a7bff"/>
<rect x="543.6" y="549.1" width="4.8" height="4.8" fill="#4a7bff"/>
<rect x="543.6" y="544.1" width="4.8" height="4.8" fill="#4a7bff"/>
<rect x="696.6" y="523.1" width="4.8" height="4.8" fill="#4a7bff"/>
<rect x="697.1" y="523.1" width="4.8" height="4.8" fill="#4a7bff"/>
<rect x="718.1" y="544.1" width="4.8" height="4.8" fill="#4a7bff"/>
<rect x="718.1" y="549.1" width="4.8" height="4.8" fill="#4a7bff"/>
<rect x="697.1" y="570.1" width="4.8" height="4.8" fill="#4a7bff"/>
<rect x="696.6" y="570.1" width="4.8" height="4.8" fill="#4a7bff"/>
<rect x="675.6" y="549.1" width="4.8" height="4.8" fill="#4a7bff"/>
<rect x="675.6" y="544.1" width="4.8" height="4.8" fill="#4a7bff"/>
<rect x="539.6" y="292.1" width="4.8" height="4.8" fill="#4a7bff"/>
<rect x="409.6" y="458.1" width="4.8" height="4.8" fill="#4a7bff"/>
<rect x="524.6" y="369.6" width="4.8" height="4.8" fill="#4a7bff"/>
<rect x="657.4" y="369.4" width="4.8" height="4.8" fill="#4a7bff"/>
<rect x="451.6" y="431.1" width="4.8" height="4.8" fill="#4a7bff"/>
<rect x="575.1" y="430.6" width="4.8" height="4.8" fill="#4a7bff"/>
<rect x="679.6" y="430.6" width="4.8" height="4.8" fill="#4a7bff"/>
<rect x="591.4" y="488.6" width="4.8" height="4.8" fill="#4a7bff"/>
<rect x="474.1" y="546.6" width="4.8" height="4.8" fill="#4a7bff"/>
<rect x="604.6" y="546.6" width="4.8" height="4.8" fill="#4a7bff"/>
<rect x="696.9" y="546.6" width="4.8" height="4.8" fill="#4a7bff"/>
<circle cx="385.0" cy="275.0" r="2.3" fill="#5165ff" stroke="#fff" stroke-width="1.15"/>
<circle cx="699.0" cy="275.0" r="2.3" fill="#5165ff" stroke="#fff" stroke-width="1.15"/>
<circle cx="699.0" cy="314.0" r="2.3" fill="#5165ff" stroke="#fff" stroke-width="1.15"/>
<circle cx="385.0" cy="314.0" r="2.3" fill="#5165ff" stroke="#fff" stroke-width="1.15"/>
<circle cx="385.0" cy="369.0" r="2.3" fill="#5165ff" stroke="#fff" stroke-width="1.15"/>
<circle cx="439.0" cy="369.0" r="2.3" fill="#5165ff" stroke="#fff" stroke-width="1.15"/>
<circle cx="439.0" cy="552.0" r="2.3" fill="#5165ff" stroke="#fff" stroke-width="1.15"/>
<circle cx="385.0" cy="552.0" r="2.3" fill="#5165ff" stroke="#fff" stroke-width="1.15"/>
<circle cx="488.0" cy="369.0" r="2.3" fill="#5165ff" stroke="#fff" stroke-width="1.15"/>
<circle cx="566.0" cy="369.0" r="2.3" fill="#5165ff" stroke="#fff" stroke-width="1.15"/>
<circle cx="566.0" cy="375.0" r="2.3" fill="#5165ff" stroke="#fff" stroke-width="1.15"/>
<circle cx="488.0" cy="375.0" r="2.3" fill="#5165ff" stroke="#fff" stroke-width="1.15"/>
<circle cx="619.5" cy="369.0" r="2.3" fill="#5165ff" stroke="#fff" stroke-width="1.15"/>
<circle cx="700.0" cy="369.0" r="2.3" fill="#5165ff" stroke="#fff" stroke-width="1.15"/>
<circle cx="700.0" cy="374.5" r="2.3" fill="#5165ff" stroke="#fff" stroke-width="1.15"/>
<circle cx="619.5" cy="374.5" r="2.3" fill="#5165ff" stroke="#fff" stroke-width="1.15"/>
<circle cx="419.0" cy="431.0" r="2.3" fill="#5165ff" stroke="#fff" stroke-width="1.15"/>
<circle cx="489.0" cy="431.0" r="2.3" fill="#5165ff" stroke="#fff" stroke-width="1.15"/>
<circle cx="489.0" cy="436.0" r="2.3" fill="#5165ff" stroke="#fff" stroke-width="1.15"/>
<circle cx="419.0" cy="436.0" r="2.3" fill="#5165ff" stroke="#fff" stroke-width="1.15"/>
<circle cx="542.0" cy="430.5" r="2.3" fill="#5165ff" stroke="#fff" stroke-width="1.15"/>
<circle cx="613.0" cy="430.5" r="2.3" fill="#5165ff" stroke="#fff" stroke-width="1.15"/>
<circle cx="613.0" cy="435.5" r="2.3" fill="#5165ff" stroke="#fff" stroke-width="1.15"/>
<circle cx="542.0" cy="435.5" r="2.3" fill="#5165ff" stroke="#fff" stroke-width="1.15"/>
<circle cx="664.0" cy="430.5" r="2.3" fill="#5165ff" stroke="#fff" stroke-width="1.15"/>
<circle cx="700.0" cy="430.5" r="2.3" fill="#5165ff" stroke="#fff" stroke-width="1.15"/>
<circle cx="700.0" cy="435.5" r="2.3" fill="#5165ff" stroke="#fff" stroke-width="1.15"/>
<circle cx="664.0" cy="435.5" r="2.3" fill="#5165ff" stroke="#fff" stroke-width="1.15"/>
<circle cx="488.0" cy="487.0" r="2.3" fill="#5165ff" stroke="#fff" stroke-width="1.15"/>
<circle cx="699.5" cy="487.0" r="2.3" fill="#5165ff" stroke="#fff" stroke-width="1.15"/>
<circle cx="699.5" cy="495.0" r="2.3" fill="#5165ff" stroke="#fff" stroke-width="1.15"/>
<circle cx="488.0" cy="495.0" r="2.3" fill="#5165ff" stroke="#fff" stroke-width="1.15"/>
<circle cx="438.0" cy="546.0" r="2.3" fill="#5165ff" stroke="#fff" stroke-width="1.15"/>
<circle cx="515.0" cy="546.0" r="2.3" fill="#5165ff" stroke="#fff" stroke-width="1.15"/>
<circle cx="515.0" cy="552.0" r="2.3" fill="#5165ff" stroke="#fff" stroke-width="1.15"/>
<circle cx="438.0" cy="552.0" r="2.3" fill="#5165ff" stroke="#fff" stroke-width="1.15"/>
<circle cx="567.0" cy="546.5" r="2.3" fill="#5165ff" stroke="#fff" stroke-width="1.15"/>
<circle cx="647.0" cy="546.5" r="2.3" fill="#5165ff" stroke="#fff" stroke-width="1.15"/>
<circle cx="647.0" cy="551.5" r="2.3" fill="#5165ff" stroke="#fff" stroke-width="1.15"/>
<circle cx="567.0" cy="551.5" r="2.3" fill="#5165ff" stroke="#fff" stroke-width="1.15"/>
<circle cx="699.0" cy="546.5" r="2.3" fill="#5165ff" stroke="#fff" stroke-width="1.15"/>
<circle cx="699.5" cy="546.5" r="2.3" fill="#5165ff" stroke="#fff" stroke-width="1.15"/>
<circle cx="699.5" cy="551.5" r="2.3" fill="#5165ff" stroke="#fff" stroke-width="1.15"/>
<circle cx="699.0" cy="551.5" r="2.3" fill="#5165ff" stroke="#fff" stroke-width="1.15"/>
<circle cx="385.5" cy="275" r="1.2" fill="#fff"/>
</svg>
<!-- DIALOG -->
<div class="a" style="left:106px;top:130px;width:222px;height:222px;background:#535353;border:4px solid #ff0000;box-shadow:0 0 4px rgba(0,0,0,0.25)"></div>
<div class="a" style="left:110px;top:134px;width:214px;height:27px;background:linear-gradient(#dfe4e6 0,#fafafa 4px,#fff 6px)"></div>
<div class="t" style="left:115px;top:140px;font-size:12px;color:#111">Corners</div>
<div class="t" style="left:137px;top:187.5px;font-size:12px;color:#d8d8d8;letter-spacing:-0.1px">Corner:</div>
<div class="a" style="left:180.5px;top:183px;width:73.5px;height:23px;background:#4e4e4e;border:1px solid #4a4a4a;border-radius:2px"></div>
<div class="a" style="left:181px;top:183.5px;width:23px;height:22px;background:#303030;border-radius:2px"></div>
<div class="a" style="left:204px;top:184px;width:1px;height:21px;background:#4a4a4a"></div>
<div class="a" style="left:229px;top:184px;width:1px;height:21px;background:#4a4a4a"></div>
<svg class="a" style="left:181px;top:183px" width="73" height="23" viewBox="0 0 73 23"><path d="M5.5 18 L5.5 14 C5.5 8 9 4.5 14.5 4.5 L18 4.5" fill="none" stroke="#f4f4f4" stroke-width="2.2"/><path d="M30 18 L30 14 L33.5 13 L36 6 L38 4.5 L43 4.5" fill="none" stroke="#b8b8b8" stroke-width="2" stroke-linejoin="round"/><path d="M54.5 18 L54.5 12 L61 4.5 L68 4.5" fill="none" stroke="#b8b8b8" stroke-width="2" stroke-linejoin="round"/></svg>
<div class="t" style="left:137.5px;top:221.5px;font-size:12px;color:#d8d8d8;letter-spacing:-0.1px">Radius:</div>
<div class="a" style="left:180px;top:217px;width:82.5px;height:21px;background:#454545;border:1px solid #3d8fe8;border-radius:2px"></div>
<div class="a" style="left:198.5px;top:218px;width:63px;height:19px;background:#fff"></div>
<div class="a" style="left:201.5px;top:220px;width:58px;height:15px;background:#0a6fd8"></div>
<svg class="a" style="left:183px;top:219px" width="13" height="17" viewBox="0 0 13 17"><path d="M3 6 L6.5 2.5 L10 6 M3 11 L6.5 14.5 L10 11" stroke="#e8e8e8" stroke-width="1.3" fill="none"/></svg>
<div class="a" style="left:201.5px;top:220px;width:58px;height:15px;overflow:hidden"><div class="t" style="left:-5.5px;top:2px;font-size:12.5px;color:#fff;letter-spacing:0.25px">30.0055 px</div></div>
<div class="a" style="left:259.5px;top:220px;width:1px;height:15px;background:#222"></div>
<div class="t" style="left:123px;top:252.5px;font-size:12px;color:#d8d8d8;letter-spacing:-0.15px">Rounding:</div>
<div class="a" style="left:180px;top:248px;width:48.5px;height:23.5px;background:#4e4e4e;border:1px solid #4a4a4a;border-radius:2px"></div>
<div class="a" style="left:204.5px;top:248.5px;width:23.5px;height:22.5px;background:#303030;border-radius:2px"></div>
<svg class="a" style="left:180px;top:248px" width="49" height="24" viewBox="0 0 49 24"><path d="M6 19 L10.5 5 L13.5 5 L18 19" fill="none" stroke="#b8b8b8" stroke-width="2" stroke-linejoin="round"/><path d="M33 17.5 L33 14.5 C31 9.5 33.5 7.5 37 7.5 C40.5 7.5 43 9.5 43 14.5 L43 17.5" fill="none" stroke="#f4f4f4" stroke-width="2.2"/></svg>
<div class="a" style="left:121.5px;top:294px;width:92px;height:26px;border:2px solid #f0f0f0;border-radius:13px"></div>
<div class="t" style="left:121.5px;top:301px;width:92px;text-align:center;font-size:12.5px;color:#f0f0f0">OK</div>
<div class="a" style="left:218.5px;top:294px;width:92.5px;height:26px;border:1.5px solid #f0f0f0;border-radius:13px"></div>
<div class="t" style="left:218.5px;top:301px;width:92.5px;text-align:center;font-size:12.5px;color:#f0f0f0">Cancel</div>


<!-- TRANSFORM PANEL -->
<div class="a" style="left:752px;top:131px;width:5px;height:320px;background:#575757"></div>
<div class="a" style="left:757px;top:129.5px;width:232px;height:320px;background:#535353;border:1px solid #3e3e3e;border-radius:3px 3px 0 0"></div>
<div class="a" style="left:758px;top:130px;width:230px;height:13px;background:#3f3f3f"></div>
<svg class="a" style="left:957px;top:133px" width="28" height="8" viewBox="0 0 28 8"><path d="M4.3 1.9 L2 4 L4.3 6.1 M8 1.9 L5.7 4 L8 6.1" stroke="#d0d0d0" stroke-width="1.2" fill="none"/><path d="M20.5 1 L26 6.5 M26 1 L20.5 6.5" stroke="#cfcfcf" stroke-width="1.8"/></svg>
<div class="a" style="left:758px;top:143px;width:230px;height:26px;background:#464646"></div>
<div class="a" style="left:758px;top:143px;width:72px;height:26.5px;background:#535353"></div>
<div class="a" style="left:873px;top:143px;width:1px;height:26px;background:#3e3e3e"></div>
<div class="a" style="left:942px;top:143px;width:1px;height:26px;background:#3e3e3e"></div>
<div class="a" style="left:830px;top:168.5px;width:158px;height:1px;background:#3e3e3e"></div>
<svg class="a" style="left:761px;top:150px" width="8" height="12" viewBox="0 0 8 12"><path d="M1.5 4.5 L4 2 L6.5 4.5 M1.5 7.5 L4 10 L6.5 7.5" stroke="#bdbdbd" stroke-width="1" fill="none"/></svg>
<div class="t" style="left:773px;top:151.5px;font-size:10px;font-weight:bold;color:#f0f0f0;letter-spacing:-0.1px">Transform</div>
<div class="t" style="left:839px;top:151.5px;font-size:10px;font-weight:bold;color:#a8a8a8;letter-spacing:-0.1px">Align</div>
<div class="t" style="left:883px;top:151.5px;font-size:10px;font-weight:bold;color:#a8a8a8;letter-spacing:-0.1px">Pathfinder</div>
<div class="a" style="left:972px;top:153px;width:10px;height:1.3px;background:#bdbdbd;box-shadow:0 3.3px 0 #bdbdbd,0 6.6px 0 #bdbdbd"></div>
<!-- ref point -->
<svg class="a" style="left:762px;top:189px" width="21" height="21" viewBox="0 0 21 21"><g fill="none" stroke="#c8c8c8" stroke-width="1"><rect x="1.5" y="1.5" width="4" height="4"/><rect x="8.5" y="1.5" width="4" height="4"/><rect x="15.5" y="1.5" width="4" height="4"/><rect x="1.5" y="8.5" width="4" height="4"/><rect x="15.5" y="8.5" width="4" height="4"/><rect x="1.5" y="15.5" width="4" height="4"/><rect x="8.5" y="15.5" width="4" height="4"/><rect x="15.5" y="15.5" width="4" height="4"/><path d="M5.5 3.5 h3 M12.5 3.5 h3 M5.5 17.5 h3 M12.5 17.5 h3 M3.5 5.5 v3 M3.5 12.5 v3 M17.5 5.5 v3 M17.5 12.5 v3"/></g><rect x="8" y="8" width="5" height="5" fill="#f0f0f0"/></svg>
<div class="t" style="left:797px;top:182px;font-size:10.5px;color:#c4c4c4;-webkit-text-stroke:0.25px #c4c4c4">X:</div>
<div class="a" style="left:809.5px;top:176.5px;width:58px;height:20px;background:#444444;border:1px solid #5b5b5b;border-radius:3px"></div>
<div class="t" style="left:814px;top:181.5px;font-size:10.5px;color:#f2f2f2;letter-spacing:-0.2px">300 px</div>
<div class="t" style="left:796px;top:208px;font-size:10.5px;color:#c4c4c4;-webkit-text-stroke:0.25px #c4c4c4">Y:</div>
<div class="a" style="left:809.5px;top:203px;width:58px;height:20px;background:#444444;border:1px solid #5b5b5b;border-radius:3px"></div>
<div class="a" style="left:810px;top:204px;width:56px;height:18px;overflow:hidden"><div class="t" style="left:3.5px;top:4px;font-size:10.2px;color:#f2f2f2;letter-spacing:-0.35px">404.6478 px</div></div>
<div class="t" style="left:873.5px;top:182px;font-size:10.5px;color:#c4c4c4;-webkit-text-stroke:0.25px #c4c4c4">W:</div>
<div class="a" style="left:889.5px;top:176.5px;width:58px;height:20px;background:#444444;border:1px solid #5b5b5b;border-radius:3px"></div>
<div class="t" style="left:894px;top:181.5px;font-size:10.5px;color:#f2f2f2;letter-spacing:-0.2px">511.2 px</div>
<div class="t" style="left:875px;top:208px;font-size:10.5px;color:#c4c4c4;-webkit-text-stroke:0.25px #c4c4c4">H:</div>
<div class="a" style="left:889.5px;top:203px;width:58px;height:20px;background:#444444;border:1px solid #5b5b5b;border-radius:3px"></div>
<div class="a" style="left:890px;top:204px;width:56px;height:18px;overflow:hidden"><div class="t" style="left:3.5px;top:4px;font-size:10.2px;color:#f2f2f2;letter-spacing:-0.35px">458.0157 px</div></div>
<svg class="a" style="left:955px;top:189px" width="18" height="20" viewBox="0 0 18 20"><path d="M7 10 L7 5.5 A2.5 2.5 0 0 1 12 5.5 L12 10 M6.5 10 L6.5 15 A2.5 2.5 0 0 0 11.5 15 L11.5 12.5" fill="none" stroke="#c8c8c8" stroke-width="1.6"/><path d="M2 3 L16 17.5" stroke="#c8c8c8" stroke-width="1.6"/></svg>
<svg class="a" style="left:790px;top:230px" width="17" height="15" viewBox="0 0 17 15"><path d="M1 13 L13 13 M1 13 L9 2 M7 13 A5 5 0 0 0 5.5 8" fill="none" stroke="#c0c0c0" stroke-width="1.2"/><text x="13.5" y="12" font-size="9" fill="#c0c0c0" font-family="Liberation Sans">:</text></svg>
<div class="a" style="left:809.5px;top:228.5px;width:56px;height:20px;background:#444444;border:1px solid #5b5b5b;border-radius:3px"></div>
<div class="a" style="left:847.5px;top:229px;width:1px;height:19px;background:#535353"></div>
<div class="t" style="left:812px;top:233.5px;font-size:10.5px;color:#f2f2f2">0°</div>
<svg class="a" style="left:851.5px;top:235.5px" width="10" height="6" viewBox="0 0 10 6"><path d="M1 1 L5 5 L9 1" stroke="#e8e8e8" stroke-width="1.4" fill="none"/></svg>
<svg class="a" style="left:872px;top:230px" width="17" height="15" viewBox="0 0 17 15"><path d="M4 3 L11 3 L8 12 L1 12 Z" fill="#c0c0c0"/><text x="12" y="12" font-size="9" fill="#c0c0c0" font-family="Liberation Sans">:</text></svg>
<div class="a" style="left:890.5px;top:228.5px;width:56px;height:20px;background:#444444;border:1px solid #5b5b5b;border-radius:3px"></div>
<div class="a" style="left:928.5px;top:229px;width:1px;height:19px;background:#535353"></div>
<div class="t" style="left:893px;top:233.5px;font-size:10.5px;color:#f2f2f2">0°</div>
<svg class="a" style="left:932px;top:235.5px" width="10" height="6" viewBox="0 0 10 6"><path d="M1 1 L5 5 L9 1" stroke="#e8e8e8" stroke-width="1.4" fill="none"/></svg>
<div class="a" style="left:763px;top:255px;width:220px;height:1px;background:#484848"></div>
<div class="t" style="left:767.5px;top:269.5px;font-size:10px;color:#cccccc;letter-spacing:-0.15px;-webkit-text-stroke:0.2px #cccccc">Rectangle Properties:</div>
<svg class="a" style="left:775px;top:293px" width="16" height="11" viewBox="0 0 16 11"><path d="M1 1 L1 10 M15 1 L15 10 M1 5.5 L15 5.5 M4 3 L1.5 5.5 L4 8 M12 3 L14.5 5.5 L12 8" fill="none" stroke="#bdbdbd" stroke-width="1.1"/></svg>
<div class="a" style="left:795px;top:289.5px;width:58.5px;height:20px;background:#464646;border:1px solid #5b5b5b;border-radius:3px"></div>
<svg class="a" style="left:863px;top:290px" width="18" height="20" viewBox="0 0 18 20"><path d="M7 10 L7 5.5 A2.5 2.5 0 0 1 12 5.5 L12 10 M6.5 10 L6.5 15 A2.5 2.5 0 0 0 11.5 15 L11.5 12.5" fill="none" stroke="#6a6a6a" stroke-width="1.6"/><path d="M2 3 L16 17.5" stroke="#6a6a6a" stroke-width="1.6"/></svg>
<div class="a" style="left:890px;top:289.5px;width:58.5px;height:20px;background:#464646;border:1px solid #5b5b5b;border-radius:3px"></div>
<svg class="a" style="left:954px;top:291px" width="11" height="17" viewBox="0 0 11 17"><path d="M1 1 L10 1 M1 16 L10 16 M5.5 1 L5.5 16 M3 4 L5.5 1.5 L8 4 M3 13 L5.5 15.5 L8 13" fill="none" stroke="#bdbdbd" stroke-width="1.1"/></svg>
<svg class="a" style="left:774px;top:319px" width="18" height="18" viewBox="0 0 18 18"><path d="M4 5 A6.5 6.5 0 1 1 9 16" fill="none" stroke="#bdbdbd" stroke-width="1.3"/><path d="M9 16 A6.5 6.5 0 0 1 2.5 10" fill="none" stroke="#bdbdbd" stroke-width="1.1" stroke-dasharray="1 1.2"/><path d="M1.5 2.5 L2.5 8 L7 5.5 Z" fill="#bdbdbd"/></svg>
<div class="a" style="left:795px;top:318.5px;width:56.5px;height:20px;background:#444;border:1px solid #5b5b5b;border-radius:3px"></div>
<div class="a" style="left:833.5px;top:319px;width:1px;height:19px;background:#535353"></div>
<div class="t" style="left:798.5px;top:323.5px;font-size:10.5px;color:#f2f2f2">0°</div>
<svg class="a" style="left:837px;top:325.5px" width="10" height="6" viewBox="0 0 10 6"><path d="M1 1 L5 5 L9 1" stroke="#e8e8e8" stroke-width="1.4" fill="none"/></svg>
<!-- corners box -->
<div class="a" style="left:759.5px;top:339px;width:226px;height:68px;border:4px solid #ff0000"></div>
<svg class="a" style="left:773px;top:347px" width="18" height="20" viewBox="0 0 18 20"><path d="M1.8 14.8 L1.8 10.5 C1.8 6.3 4.8 3.8 8.8 3.8 L13 3.8" fill="none" stroke="#cdcdcd" stroke-width="2"/><path d="M14 15.3 L17 15.3 L15.5 17 Z" fill="#bdbdbd"/></svg>
<svg class="a" style="left:773px;top:378px" width="18" height="20" viewBox="0 0 18 20"><path d="M1.8 2.5 L1.8 7 C1.8 11.2 4.8 13.8 8.8 13.8 L13 13.8" fill="none" stroke="#cdcdcd" stroke-width="2"/><path d="M14 15.3 L17 15.3 L15.5 17 Z" fill="#bdbdbd"/></svg>
<svg class="a" style="left:952px;top:347px" width="20" height="20" viewBox="0 0 20 20"><path d="M2 3.8 L6.2 3.8 C10.2 3.8 13.2 6.3 13.2 10.5 L13.2 14.8" fill="none" stroke="#cdcdcd" stroke-width="2"/><path d="M15 15.3 L18 15.3 L16.5 17 Z" fill="#bdbdbd"/></svg>
<svg class="a" style="left:952px;top:378px" width="20" height="20" viewBox="0 0 20 20"><path d="M2 13.8 L6.2 13.8 C10.2 13.8 13.2 11.2 13.2 7 L13.2 2.5" fill="none" stroke="#cdcdcd" stroke-width="2"/><path d="M15 15.3 L18 15.3 L16.5 17 Z" fill="#bdbdbd"/></svg>
<div class="a" style="left:795px;top:346.5px;width:56.5px;height:20px;background:#474747;border:1px solid #5b5b5b;border-radius:3px"></div>
<div class="a" style="left:813px;top:347px;width:38px;height:19px;background:#404040;border-radius:0 3px 3px 0"></div>
<svg class="a" style="left:798.5px;top:348px" width="12" height="17" viewBox="0 0 12 17"><path d="M2.5 5.5 L6 2 L9.5 5.5 M2.5 11.5 L6 15 L9.5 11.5" stroke="#e0e0e0" stroke-width="1.3" fill="none"/></svg>
<div class="a" style="left:813px;top:347px;width:37px;height:19px;overflow:hidden"><div class="t" style="left:3.5px;top:5px;font-size:10.2px;color:#f2f2f2;letter-spacing:-0.4px">30.0055</div></div>
<div class="a" style="left:795px;top:377.5px;width:56.5px;height:20px;background:#474747;border:1px solid #5b5b5b;border-radius:3px"></div>
<div class="a" style="left:813px;top:378px;width:38px;height:19px;background:#404040;border-radius:0 3px 3px 0"></div>
<svg class="a" style="left:798.5px;top:379px" width="12" height="17" viewBox="0 0 12 17"><path d="M2.5 5.5 L6 2 L9.5 5.5 M2.5 11.5 L6 15 L9.5 11.5" stroke="#e0e0e0" stroke-width="1.3" fill="none"/></svg>
<div class="a" style="left:813px;top:378px;width:37px;height:19px;overflow:hidden"><div class="t" style="left:3.5px;top:5px;font-size:10.2px;color:#f2f2f2;letter-spacing:-0.4px">30.0055</div></div>
<div class="a" style="left:890px;top:346.5px;width:56.5px;height:20px;background:#474747;border:1px solid #5b5b5b;border-radius:3px"></div>
<div class="a" style="left:908px;top:347px;width:38px;height:19px;background:#404040;border-radius:0 3px 3px 0"></div>
<svg class="a" style="left:893.5px;top:348px" width="12" height="17" viewBox="0 0 12 17"><path d="M2.5 5.5 L6 2 L9.5 5.5 M2.5 11.5 L6 15 L9.5 11.5" stroke="#e0e0e0" stroke-width="1.3" fill="none"/></svg>
<div class="a" style="left:908px;top:347px;width:37px;height:19px;overflow:hidden"><div class="t" style="left:3.5px;top:5px;font-size:10.2px;color:#f2f2f2;letter-spacing:-0.4px">30.0055</div></div>
<div class="a" style="left:890px;top:377.5px;width:56.5px;height:20px;background:#474747;border:1px solid #5b5b5b;border-radius:3px"></div>
<div class="a" style="left:908px;top:378px;width:38px;height:19px;background:#404040;border-radius:0 3px 3px 0"></div>
<svg class="a" style="left:893.5px;top:379px" width="12" height="17" viewBox="0 0 12 17"><path d="M2.5 5.5 L6 2 L9.5 5.5 M2.5 11.5 L6 15 L9.5 11.5" stroke="#e0e0e0" stroke-width="1.3" fill="none"/></svg>
<div class="a" style="left:908px;top:378px;width:37px;height:19px;overflow:hidden"><div class="t" style="left:3.5px;top:5px;font-size:10.2px;color:#f2f2f2;letter-spacing:-0.4px">30.0055</div></div>
<svg class="a" style="left:863px;top:362px" width="18" height="20" viewBox="0 0 18 20"><path d="M7 10 L7 5.5 A2.5 2.5 0 0 1 12 5.5 L12 10 M6.5 10 L6.5 15 A2.5 2.5 0 0 0 11.5 15 L11.5 12.5" fill="none" stroke="#6a6a6a" stroke-width="1.6"/><path d="M2 3 L16 17.5" stroke="#6a6a6a" stroke-width="1.6"/></svg>
<div class="a" style="left:764.5px;top:410.5px;width:11.5px;height:11.5px;border:1px solid #c8c8c8"></div>
<div class="t" style="left:781px;top:412px;font-size:10px;color:#ececec;letter-spacing:-0.2px;-webkit-text-stroke:0.25px #ececec">Scale Corners</div>
<div class="a" style="left:764.5px;top:430.5px;width:11.5px;height:11.5px;border:1px solid #c8c8c8"></div>
<div class="t" style="left:781px;top:432px;font-size:10px;color:#ececec;letter-spacing:-0.2px;-webkit-text-stroke:0.25px #ececec">Scale Strokes &amp; Effects</div>
</body></html>
